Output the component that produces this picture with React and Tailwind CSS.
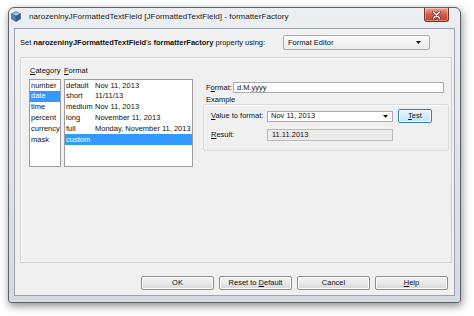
const categories = ['number', 'date', 'time', 'percent', 'currency', 'mask'];

const formats = [
  ['default', 'Nov 11, 2013'],
  ['short', '11/11/13'],
  ['medium', 'Nov 11, 2013'],
  ['long', 'November 11, 2013'],
  ['full', 'Monday, November 11, 2013'],
  ['custom', ''],
];

// mnemonic letter
const U = ({ children }) => <span className="underline underline-offset-[1px]">{children}</span>;

const CubeIcon = () => (
  <svg width="10" height="11" viewBox="0 0 10 11" className="mt-[3px] shrink-0">
    <path d="M5 0.5 L9.5 2.8 L5 5.2 L0.5 2.8 Z" fill="#9fc3e6" stroke="#3d5f86" strokeWidth="0.6" />
    <path d="M0.5 2.8 L5 5.2 L5 10.5 L0.5 8.1 Z" fill="#4f82b8" stroke="#3d5f86" strokeWidth="0.6" />
    <path d="M9.5 2.8 L5 5.2 L5 10.5 L9.5 8.1 Z" fill="#2f5d8f" stroke="#3d5f86" strokeWidth="0.6" />
  </svg>
);

const CloseButton = () => (
  <div className="ml-auto mr-[11px] w-[25px] h-[14px] flex items-center justify-center rounded-b-[3px] border border-t-0 border-[#7a3025] bg-gradient-to-b from-[#e9a99c] via-[#d05a46] to-[#c8452f] shadow-[inset_0_0_0_1px_rgba(255,255,255,0.35)]">
    <svg width="9" height="8" viewBox="0 0 9 8">
      <path d="M1.5 1 L7.5 7 M7.5 1 L1.5 7" stroke="#5a1a12" strokeWidth="2.6" strokeLinecap="round" />
      <path d="M1.5 1 L7.5 7 M7.5 1 L1.5 7" stroke="#ffffff" strokeWidth="1.5" strokeLinecap="round" />
    </svg>
  </div>
);

const DropArrow = () => (
  <svg width="5" height="3" viewBox="0 0 5 3" className="shrink-0">
    <path d="M0 0 L5 0 L2.5 3 Z" fill="#111" />
  </svg>
);

const DialogButton = ({ children }) => (
  <div className="w-[73px] h-[14px] flex items-center justify-center rounded-[2px] border border-[#8e8f8f] bg-gradient-to-b from-[#f4f4f4] via-[#e9e9e9] to-[#d6d6d6] shadow-[inset_0_0_0_1px_#fcfcfc]">
    <span className="whitespace-nowrap">{children}</span>
  </div>
);

export default function App() {
  return (
    <div className="w-[474px] h-[316px] bg-white pt-[7px] pl-[8px] font-['Liberation_Sans',Arial,sans-serif] text-[7.5px] leading-none text-[#111]">
      <div className="w-[453px] h-[296px] flex flex-col rounded-t-[6px] rounded-b-[3px] border border-[#5b626b] bg-gradient-to-b from-[#eceff2] to-[#d6dbe0] shadow-[1px_3px_8px_rgba(0,0,0,0.45)]">
        {/* title bar */}
        <div className="h-[20px] shrink-0 flex items-start pl-[2px]">
          <CubeIcon />
          <span className="ml-[8px] mt-[5px] text-[8.1px] text-[#1b1b1b] whitespace-nowrap">
            narozeninyJFormattedTextField [JFormattedTextField] - formatterFactory
          </span>
          <CloseButton />
        </div>

        {/* client area */}
        <div className="mx-[5px] mb-[6px] flex-1 flex flex-col border border-[#9ba4ae] bg-[#f0f0f0]">
          <div className="mt-[6px] h-[15px] flex items-center pl-[5px]">
            <div className="w-[263px] whitespace-nowrap">
              Set <b>narozeninyJFormattedTextField</b>'s <b>formatterFactory</b> property using:
            </div>
            <div className="w-[147px] h-full flex items-center pl-[4px] pr-[8px] border border-[#a9abae] rounded-[2px] bg-gradient-to-b from-[#fbfbfb] to-[#ececec]">
              <span className="flex-1">Format Editor</span>
              <DropArrow />
            </div>
          </div>

          {/* editor panel */}
          <div className="mt-[7px] ml-[5px] w-[432px] h-[206px] shrink-0 flex border border-[#cdd1d6] shadow-[inset_1px_1px_0_#ffffff]">
            <div className="w-[172px] pl-[8px] pt-[6px] flex flex-col">
              <div className="h-[14px] flex items-center">
                <span className="w-[34px] ml-[1px]"><U>C</U>ategory</span>
                <span><U>F</U>ormat</span>
              </div>
              <div className="mt-[1px] flex gap-[3px]">
                <div className="w-[32px] h-[88px] border border-[#9a9ca0] bg-white">
                  {categories.map((c) => (
                    <div
                      key={c}
                      className={`h-[10.8px] flex items-center pl-[1px] ${c === 'date' ? 'bg-[#3399ff] text-white' : ''}`}
                    >
                      {c}
                    </div>
                  ))}
                </div>
                <div className="w-[129px] h-[88px] border border-[#9a9ca0] bg-white">
                  {formats.map(([name, value]) => (
                    <div
                      key={name}
                      className={`h-[10.8px] flex items-center pl-[1px] ${name === 'custom' ? 'bg-[#3399ff] text-white' : ''}`}
                    >
                      <span className="w-[29px]">{name}</span>
                      <span className="whitespace-nowrap">{value}</span>
                    </div>
                  ))}
                </div>
              </div>
            </div>

            <div className="ml-[10px] w-[246px] pt-[24px] flex flex-col">
              <div className="h-[11px] flex items-center">
                <span className="w-[30px] pl-[3px]">F<U>o</U>rmat:</span>
                <div className="w-[211px] h-full flex items-center pl-[3px] border border-[#abadb3] bg-white">
                  d.M.yyyy
                </div>
              </div>
              <div className="mt-[2px] h-[9px] flex items-center pl-[3px]">Example</div>
              <div className="h-[47px] flex flex-col border border-[#d9dcdf] rounded-[2px] shadow-[inset_1px_1px_0_#fafafa] pl-[7px] pt-[4px]">
                <div className="h-[14px] flex items-center">
                  <span className="w-[56px]"><U>V</U>alue to format:</span>
                  <div className="w-[126px] h-[11px] flex items-center pl-[3px] pr-[4px] border border-[#abadb3] bg-white">
                    <span className="flex-1">Nov 11, 2013</span>
                    <DropArrow />
                  </div>
                  <div className="ml-[5px] w-[34px] h-full flex items-center justify-center rounded-[2px] border border-[#3c7fb1] bg-gradient-to-b from-[#eaf6fd] to-[#bee6fd] shadow-[inset_0_0_0_1px_#f4fbff]">
                    <span><U>T</U>est</span>
                  </div>
                </div>
                <div className="mt-[6px] h-[12px] flex items-center">
                  <span className="w-[56px]"><U>R</U>esult:</span>
                  <div className="w-[126px] h-full flex items-center pl-[4px] border border-[#b8babd] bg-[#ebebeb]">
                    11.11.2013
                  </div>
                </div>
              </div>
            </div>
          </div>

          {/* dialog buttons */}
          <div className="mt-[13px] flex justify-end gap-[5px] pr-[6px]">
            <DialogButton>OK</DialogButton>
            <DialogButton>Reset to <U>D</U>efault</DialogButton>
            <DialogButton>Cancel</DialogButton>
            <DialogButton><U>H</U>elp</DialogButton>
          </div>
        </div>
      </div>
    </div>
  );
}
